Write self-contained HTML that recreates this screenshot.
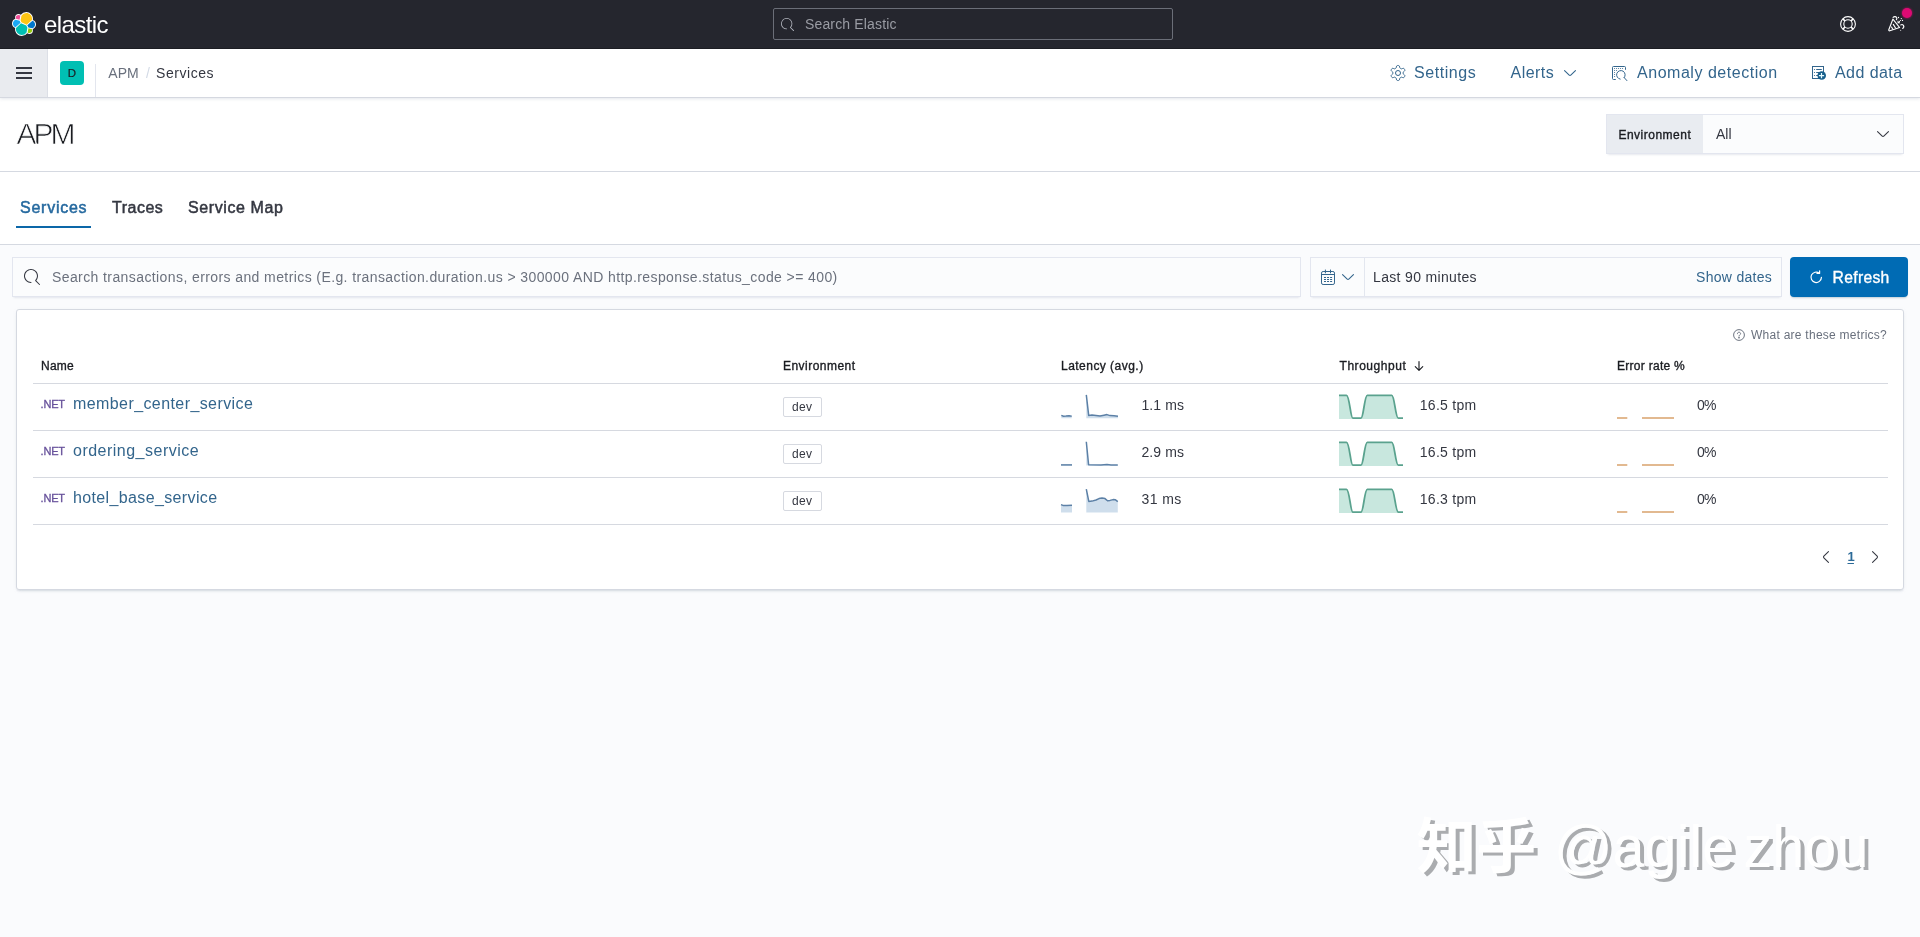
<!DOCTYPE html>
<html lang="en">
<head>
<meta charset="utf-8">
<title>Services - APM - Elastic</title>
<style>
*{box-sizing:border-box;margin:0;padding:0}
html,body{width:1920px;height:937px;overflow:hidden}
body{background:#fafbfd;font-family:"Liberation Sans","Noto Sans CJK SC",sans-serif;color:#343741;position:relative;font-size:14px}
#app{position:absolute;left:0;top:0;width:1920px;height:937px;will-change:transform}
.abs{position:absolute}
.t{position:absolute;white-space:pre;line-height:1}
svg{position:absolute;overflow:visible}
a{color:inherit;text-decoration:none}
.med{-webkit-text-stroke:.35px currentColor}

/* top dark bar */
#topbar{position:absolute;left:0;top:0;width:1920px;height:49px;background:#25262e;border-bottom:1px solid #1b1c22}
#brand{left:44px;top:13px;font-size:24px;color:#fff;letter-spacing:-.6px}
#gsearch{position:absolute;left:773px;top:8px;width:400px;height:32px;border:1px solid #6b6e78;border-radius:2px;background:#25262e}
#gsearch span{left:31px;top:8px;font-size:14px;color:#9a9ca4;letter-spacing:.15px}

/* second header */
#subhdr{position:absolute;left:0;top:49px;width:1920px;height:48px;background:#fff;z-index:5;box-shadow:0 1px 0 rgba(211,214,222,.9),0 2px 3px 0 rgba(152,162,179,.25)}
#menubtn{position:absolute;left:0;top:0;width:48px;height:48px;background:#e9ebef;border-right:1px solid #dcdfe6}
#avatar{position:absolute;left:60px;top:12px;width:24px;height:24px;border-radius:4px;background:#00bfb3;color:#1a1c21;font-size:11.500px;text-align:center;line-height:24px}
#avsep{position:absolute;left:95px;top:15px;width:1px;height:33px;background:#e3e6ee}
.bc{font-size:14px;top:17px}
.hl{font-size:16px;top:16px;color:#33658c}

/* page title */
#titlebar{position:absolute;left:0;top:97px;width:1920px;height:75px;background:#fff;border-bottom:1px solid #d5d9e1}
#ptitle{left:16.500px;top:22px;font-size:30px;color:#1a1c21;letter-spacing:-3px;-webkit-text-stroke:.7px #fff}
#envsel{position:absolute;left:1606px;top:17px;width:298px;height:40px;background:#fbfcfd;box-shadow:0 1px 1px -1px rgba(152,162,179,.2),0 3px 2px -2px rgba(152,162,179,.2),inset 0 0 0 1px rgba(15,39,118,.1)}
#envlab{position:absolute;left:1px;top:1px;width:96px;height:38px;background:#e9ecf1}

/* tabs */
#tabbar{position:absolute;left:0;top:172px;width:1920px;height:73px;background:#fff;border-bottom:1px solid #d5d9e1}
.tab{font-size:16px;top:28px;color:#343741;-webkit-text-stroke:.5px currentColor}
#tabsel{position:absolute;left:16px;top:54px;width:75px;height:2px;background:#0c67a8}

/* query row */
.field{position:absolute;height:40px;top:257px;background:#fbfcfd;box-shadow:0 1px 1px -1px rgba(152,162,179,.2),0 3px 2px -2px rgba(152,162,179,.2),inset 0 0 0 1px rgba(15,39,118,.1)}
#refresh{position:absolute;left:1790px;top:257px;width:118px;height:40px;border-radius:4px;background:#006bb4;box-shadow:0 2px 2px -1px rgba(54,97,126,.3)}

/* panel */
#panel{position:absolute;left:16px;top:309px;width:1888px;height:281px;background:#fff;border:1px solid #d5d9e1;border-radius:3px;box-shadow:0 2px 2px -1px rgba(152,162,179,.3),0 1px 5px -2px rgba(152,162,179,.3)}
.hline{position:absolute;left:16px;width:1855px;height:1px;background:#d6d9e0}
.th{font-size:12px;top:50px;color:#1a1c21}
.cell{font-size:14px;color:#343741}
.svc{font-size:16px;color:#33658c;letter-spacing:.45px}
.net{font-size:11px;color:#66509a;letter-spacing:-.2px;-webkit-text-stroke:.3px currentColor}
.badge{position:absolute;left:766px;width:39px;height:20px;border:1px solid #d6d9e0;border-radius:2px;background:#fff}
.badge span{left:8px;top:3px;font-size:12px;letter-spacing:.28px;color:#343741}

/* watermark */
#wm{left:0;top:0;color:#fff;text-shadow:4px 3px 0 #aaacaf}
#wm span{position:absolute;white-space:pre;line-height:1;display:block}
#wmc{left:1416.500px;top:818px;font-size:60px;letter-spacing:-.2px;font-weight:700}
#wml{left:1554.400px;top:817.500px;font-size:59px;word-spacing:-7px;transform-origin:0 0;transform:scaleX(.977)}
</style>
</head>
<body>
<div id="app">

<header id="topbar">
  <svg id="logo" style="left:12px;top:12px" width="24" height="24" viewBox="0 0 32 32">
    <g fill="none" fill-rule="evenodd">
      <path fill="#FFF" d="M32 16.77a6.334 6.334 0 00-4.188-5.965c.116-.613.172-1.22.172-1.84C27.984 4.018 23.966 0 19.031 0a8.904 8.904 0 00-7.256 3.712 4.733 4.733 0 00-2.897-.987 4.753 4.753 0 00-4.747 4.747c0 .56.102 1.111.283 1.626C1.763 10.046 0 12.573 0 15.26c0 2.673 1.659 5.069 4.2 5.976a8.973 8.973 0 00-.171 1.84c0 4.928 4.011 8.939 8.939 8.939a8.913 8.913 0 007.256-3.727 4.738 4.738 0 002.897 1.002 4.753 4.753 0 004.747-4.748c0-.56-.102-1.11-.283-1.626 2.633-.948 4.415-3.474 4.415-6.146"/>
      <path fill="#FEC514" d="M12.58 13.787l7.002 3.211 7.066-6.213a7.849 7.849 0 00.152-1.557c0-4.287-3.487-7.774-7.774-7.774a7.76 7.76 0 00-6.416 3.394l-1.177 6.107 1.147 2.832z"/>
      <path fill="#00BFB3" d="M5.352 21.215c-.103.512-.152 1.033-.152 1.573 0 4.3 3.497 7.79 7.796 7.79a7.78 7.78 0 006.421-3.4l1.168-6.065-1.558-2.975-7.023-3.193-6.652 6.27z"/>
      <path fill="#F04E98" d="M5.305 9.085l4.794 1.135 1.05-5.471a3.794 3.794 0 00-2.271-.756 3.782 3.782 0 00-3.782 3.782c0 .455.075.89.209 1.31"/>
      <path fill="#1BA9F5" d="M4.889 10.231c-2.141.711-3.636 2.767-3.636 5.05 0 2.22 1.374 4.204 3.44 4.99l6.73-6.083-1.236-2.64-5.298-1.317z"/>
      <path fill="#93C90E" d="M20.873 27.178a3.768 3.768 0 002.263.767 3.782 3.782 0 003.782-3.782c0-.456-.075-.89-.209-1.31l-4.79-1.121-1.046 5.446z"/>
      <path fill="#07C" d="M21.847 20.563l5.271 1.232c2.148-.711 3.636-2.767 3.636-5.053 0-2.215-1.38-4.202-3.45-4.986l-6.895 6.042 1.438 2.765z"/>
    </g>
  </svg>
  <span class="t" id="brand">elastic</span>

  <div id="gsearch">
    <svg style="left:7px;top:9px" width="13" height="13" viewBox="0 0 16 16" fill="#b4b7c0"><path d="M11.271 11.978l3.872 3.873a.502.502 0 00.708 0 .502.502 0 000-.708l-3.565-3.564c2.38-2.747 2.267-6.923-.342-9.532-2.73-2.73-7.17-2.73-9.898 0-2.728 2.729-2.728 7.17 0 9.9a6.955 6.955 0 004.949 2.05.5.5 0 000-1 5.96 5.96 0 01-4.242-1.757 6.01 6.01 0 010-8.486c2.337-2.34 6.143-2.34 8.484 0a6.01 6.01 0 010 8.486.5.5 0 00.034.738z"/></svg>
    <span class="t">Search Elastic</span>
  </div>

  <!-- help (lifebuoy) -->
  <svg style="left:1840px;top:16px" width="16" height="16" viewBox="0 0 16 16" fill="none" stroke="#fff" stroke-width="1.1">
    <circle cx="8" cy="8" r="7.4"/><circle cx="8" cy="8" r="4.2"/>
    <path d="M2.8 2.8l2.3 2.3M13.2 2.8l-2.3 2.3M2.8 13.2l2.3-2.3M13.2 13.2l-2.3-2.3" stroke-width="1.6"/>
  </svg>
  <!-- cheer (party popper) -->
  <svg style="left:1888px;top:16px" width="16" height="16" viewBox="0 0 16 16" fill="none" stroke="#fff" stroke-width="1.150" stroke-linecap="round" stroke-linejoin="round">
    <path d="M4.900 3.100L.800 13.700a.800.800 0 001 1.050L11.600 11.500z"/>
    <path d="M5.300 8.400l2.100 3.400M3.500 11l1.200 2"/>
    <path d="M5.100 1.300c1-1 2.800-.9 3.500.200.500.800.300 1.500-.200 2.200"/>
    <path d="M12.800 8.900c.8-.5 2-.3 2.600.5.700 1 .3 2.300-.700 3.100"/>
    <path d="M12.600 4.400l-2.600 2.400M10 5.200v1.600h1.600" stroke-width="1"/>
    <g fill="#fff" stroke="none"><circle cx="10.500" cy="1.500" r=".65"/><circle cx="13.300" cy="2.600" r=".65"/><circle cx="14.500" cy="4.400" r=".65"/><circle cx="12.700" cy="14.300" r=".5"/></g>
  </svg>
  <div class="abs" style="left:1902.300px;top:8.200px;width:10px;height:10px;border-radius:50%;background:#dd0a73;box-shadow:0 0 2px 0.5px rgba(221,10,115,.55)"></div>
</header>

<nav id="subhdr">
  <div id="menubtn">
    <svg style="left:16px;top:16px" width="16" height="16" viewBox="0 0 16 16" fill="#343741"><path d="M0 2h16v2H0zM0 7h16v2H0zM0 12h16v2H0z"/></svg>
  </div>
  <div id="avatar"><span style="-webkit-text-stroke:.2px currentColor">D</span></div>
  <div id="avsep"></div>
  <span class="t bc" style="left:108.300px;color:#69707d;letter-spacing:.05px">APM</span>
  <span class="t bc" style="left:146px;color:#d3dae6">/</span>
  <span class="t bc" style="left:156px;color:#343741;letter-spacing:.55px">Services</span>

  <!-- Settings -->
  <svg style="left:1390px;top:16px" width="16" height="16" viewBox="0 0 16 16" fill="none" stroke="#33658c" stroke-width="1" stroke-linejoin="round">
    <path d="M13.20 8.00 L13.20 8.34 L13.24 8.69 L13.47 9.09 L14.13 9.64 L14.74 10.29 L14.85 10.84 L14.71 11.31 L14.50 11.75 L14.22 12.16 L13.88 12.51 L13.35 12.69 L12.49 12.49 L11.68 12.20 L11.22 12.20 L10.90 12.34 L10.60 12.50 L10.31 12.68 L10.02 12.89 L9.79 13.29 L9.64 14.13 L9.39 14.98 L8.97 15.35 L8.49 15.47 L8.00 15.50 L7.51 15.47 L7.03 15.35 L6.61 14.98 L6.36 14.13 L6.21 13.29 L5.98 12.89 L5.69 12.68 L5.40 12.50 L5.10 12.34 L4.78 12.20 L4.32 12.20 L3.51 12.49 L2.65 12.69 L2.12 12.51 L1.78 12.16 L1.50 11.75 L1.29 11.31 L1.15 10.84 L1.26 10.29 L1.87 9.64 L2.53 9.09 L2.76 8.69 L2.80 8.34 L2.80 8.00 L2.80 7.66 L2.76 7.31 L2.53 6.91 L1.87 6.36 L1.26 5.71 L1.15 5.16 L1.29 4.69 L1.50 4.25 L1.78 3.84 L2.12 3.49 L2.65 3.31 L3.51 3.51 L4.32 3.80 L4.78 3.80 L5.10 3.66 L5.40 3.50 L5.69 3.32 L5.98 3.11 L6.21 2.71 L6.36 1.87 L6.61 1.02 L7.03 0.65 L7.51 0.53 L8.00 0.50 L8.49 0.53 L8.97 0.65 L9.39 1.02 L9.64 1.87 L9.79 2.71 L10.02 3.11 L10.31 3.32 L10.60 3.50 L10.90 3.66 L11.22 3.80 L11.68 3.80 L12.49 3.51 L13.35 3.31 L13.88 3.49 L14.22 3.84 L14.50 4.25 L14.71 4.69 L14.85 5.16 L14.74 5.71 L14.13 6.36 L13.47 6.91 L13.24 7.31 L13.20 7.66Z"/>
    <circle cx="8" cy="8" r="2.5"/>
  </svg>
  <span class="t hl" style="left:1414px;letter-spacing:.55px">Settings</span>
  <span class="t hl" style="left:1510.500px;letter-spacing:.47px">Alerts</span>
  <svg style="left:1562px;top:16px" width="16" height="16" viewBox="0 0 16 16" fill="#33658c"><path d="M13.069 5.157L8.384 9.768a.546.546 0 01-.768 0L2.93 5.158a.552.552 0 00-.771 0 .53.53 0 000 .759l4.684 4.61c.641.631 1.672.63 2.312 0l4.684-4.61a.53.53 0 000-.76.552.552 0 00-.771 0z"/></svg>

  <!-- Anomaly detection (inspect) -->
  <svg style="left:1611px;top:16px" width="16" height="16" viewBox="0 0 16 16" fill="none" stroke="#33658c" stroke-width="1" stroke-linecap="round">
    <path d="M4.400 14.500H2.500a1 1 0 01-1-1V2.500a1 1 0 011-1h11a1 1 0 011 1v1.900"/>
    <g fill="#33658c" stroke="none">
      <circle cx="3.600" cy="3.500" r=".55"/><circle cx="5.600" cy="3.500" r=".55"/><circle cx="7.600" cy="3.500" r=".55"/><circle cx="9.600" cy="3.500" r=".55"/><circle cx="11.600" cy="3.500" r=".55"/>
      <circle cx="3.600" cy="5.500" r=".55"/><circle cx="5.600" cy="5.500" r=".55"/>
      <circle cx="3.600" cy="7.500" r=".55"/><circle cx="3.600" cy="9.500" r=".55"/><circle cx="3.600" cy="11.500" r=".55"/>
    </g>
    <path d="M9.150 14.130A4.300 4.300 0 1113.190 12.660"/>
    <path d="M13.200 12.600l2.700 3"/>
  </svg>
  <span class="t hl" style="left:1637px;letter-spacing:.53px">Anomaly detection</span>

  <!-- Add data (indexOpen) -->
  <svg style="left:1811px;top:16px" width="16" height="16" viewBox="0 0 16 16" fill="none" stroke="#33658c" stroke-width="1">
    <rect x="1.500" y="1.500" width="11" height="12"/>
    <path d="M5.200 4.500h5.600M5.200 7.500h3M5.200 10.500h2" stroke-width="1.100"/>
    <g fill="#33658c" stroke="none"><circle cx="3.500" cy="4.500" r=".6"/><circle cx="3.500" cy="7.500" r=".6"/><circle cx="3.500" cy="10.500" r=".6"/></g>
    <circle cx="10.700" cy="10.500" r="4.300" fill="#175f8c" stroke="none"/>
    <path d="M10.500 8v5.200M7.900 10.600h5.200" stroke="#e6fbff" stroke-width="1.200"/>
  </svg>
  <span class="t hl" style="left:1835px;letter-spacing:.43px">Add data</span>
</nav>

<section id="titlebar">
  <h1 class="t" id="ptitle" style="font-weight:400">APM</h1>
  <div id="envsel">
    <div id="envlab"><span class="t med" style="left:11.400px;top:13.500px;font-size:12px;color:#1a1c21;letter-spacing:.5px">Environment</span></div>
    <span class="t" style="left:110px;top:13px;font-size:14px;color:#343741">All</span>
    <svg style="left:269px;top:12px" width="16" height="16" viewBox="0 0 16 16" fill="#343741"><path d="M13.069 5.157L8.384 9.768a.546.546 0 01-.768 0L2.93 5.158a.552.552 0 00-.771 0 .53.53 0 000 .759l4.684 4.61c.641.631 1.672.63 2.312 0l4.684-4.61a.53.53 0 000-.76.552.552 0 00-.771 0z"/></svg>
  </div>
</section>

<section id="tabbar">
  <span class="t tab med" style="left:20px;color:#25699f;letter-spacing:.75px">Services</span>
  <span class="t tab med" style="left:112px;letter-spacing:.5px">Traces</span>
  <span class="t tab med" style="left:188px;letter-spacing:.6px">Service Map</span>
  <div id="tabsel"></div>
</section>

<!-- query bar -->
<div class="field" style="left:12px;width:1289px">
  <svg style="left:12px;top:12px" width="16" height="16" viewBox="0 0 16 16" fill="#343741"><path d="M11.271 11.978l3.872 3.873a.502.502 0 00.708 0 .502.502 0 000-.708l-3.565-3.564c2.38-2.747 2.267-6.923-.342-9.532-2.73-2.73-7.17-2.73-9.898 0-2.728 2.729-2.728 7.170 0 9.900a6.955 6.955 0 004.949 2.050.5.5 0 000-1 5.960 5.960 0 01-4.242-1.757 6.010 6.010 0 010-8.486c2.337-2.340 6.143-2.340 8.484 0a6.010 6.010 0 010 8.486.5.5 0 00.034.738z"/></svg>
  <span class="t" style="left:40px;top:13px;font-size:14px;color:#6b717d;letter-spacing:.403px">Search transactions, errors and metrics (E.g. transaction.duration.us &gt; 300000 AND http.response.status_code &gt;= 400)</span>
</div>

<div class="field" style="left:1310px;width:472px">
  <div class="abs" style="left:54px;top:1px;width:1px;height:38px;background:#e3e7ef"></div>
  <!-- calendar -->
  <svg style="left:10px;top:12px" width="16" height="16" viewBox="0 0 16 16" fill="none" stroke="#33658c" stroke-width="1">
    <rect x="1.500" y="2.500" width="13" height="13" rx="1.600"/>
    <path d="M1.500 5.500h13M5.400 1v2.900M10.500 1v2.900" stroke-linecap="round"/>
    <path d="M4 8.500h8.500M4 10.500h8.500M4 12.500h8.500" stroke-dasharray="2 1.050" stroke-width="1.100"/>
  </svg>
  <svg style="left:30px;top:12px" width="16" height="16" viewBox="0 0 16 16" fill="#33658c"><path d="M13.069 5.157L8.384 9.768a.546.546 0 01-.768 0L2.930 5.158a.552.552 0 00-.771 0 .53.53 0 000 .759l4.684 4.610c.641.631 1.672.630 2.312 0l4.684-4.610a.53.53 0 000-.760.552.552 0 00-.771 0z"/></svg>
  <span class="t" style="left:63px;top:13px;font-size:14px;color:#343741;letter-spacing:.34px">Last 90 minutes</span>
  <span class="t" style="left:386px;top:13px;font-size:14px;color:#33658c;letter-spacing:.3px">Show dates</span>
</div>

<div id="refresh">
  <svg style="left:19px;top:12.700px" width="14.400" height="14.400" viewBox="0 0 16 16" fill="none" stroke="#fff" stroke-width="1.300" stroke-linecap="round" stroke-linejoin="round">
    <path d="M13.800 8.200a5.800 5.800 0 11-2.300-4.700"/>
    <path d="M11.800 .9v3h-3"/>
  </svg>
  <span class="t med" style="left:42.600px;top:12.500px;font-size:15.700px;color:#fff;letter-spacing:.3px">Refresh</span>
</div>

<main id="panel">
  <svg style="left:1716px;top:18.700px" width="12" height="12" viewBox="0 0 16 16" fill="none" stroke="#69707d" stroke-width="1.300">
    <circle cx="8" cy="8" r="7.200"/>
    <path d="M5.900 6.300c0-1.200.9-2 2.100-2s2.100.8 2.100 1.900c0 1.600-2.100 1.500-2.100 3.300" stroke-linecap="round"/>
    <circle cx="8" cy="11.700" r=".6" fill="#69707d"/>
  </svg>
  <span class="t" style="left:1734px;top:19px;font-size:12px;color:#69707d;letter-spacing:.26px">What are these metrics?</span>

  <span class="t th med" style="left:24px;letter-spacing:.25px">Name</span>
  <span class="t th med" style="left:766px;letter-spacing:.47px">Environment</span>
  <span class="t th med" style="left:1044px;letter-spacing:.47px">Latency (avg.)</span>
  <span class="t th med" style="left:1322.500px;letter-spacing:.55px">Throughput</span>
  <svg style="left:1396px;top:50px" width="12" height="12" viewBox="0 0 16 16" fill="none" stroke="#1a1c21" stroke-width="1.500" stroke-linecap="round" stroke-linejoin="round"><path d="M8 2v11.500M3 8.800l5 5 5-5"/></svg>
  <span class="t th med" style="left:1600px;letter-spacing:.28px">Error rate %</span>

  <div class="hline" style="top:73px"></div>
  <div class="hline" style="top:120px"></div>
  <div class="hline" style="top:167px"></div>
  <div class="hline" style="top:214px"></div>

  <!-- rows inserted below -->
  <div id="rows">
  <article class="row" style="position:absolute;left:0;top:73px;width:1886px;height:47px">
    <span class="t net" style="left:23.600px;top:15.600px">.NET</span>
    <a class="t svc" style="left:56px;top:13px;letter-spacing:.41px">member_center_service</a>
    <div class="badge" style="top:14px"><span class="t">dev</span></div>
    <svg style="left:1044px;top:0" width="64" height="47" viewBox="0 0 64 47" fill="none">
      <path d="M0.3 32.4 L2.5 33.2 L5 33.1 L8 32.7 L10.7 33.2 L10.7 35.2 L0.3 35.2Z" fill="#6092c0" fill-opacity=".3"/>
      <path d="M25.3 11.8 L27.7 32.4 L31 31.9 L35 32.4 L39 33 L43 32.2 L46 31.6 L49 32.6 L53 32.8 L57 33.3 L57 35.2 L25.3 35.2Z" fill="#6092c0" fill-opacity=".3"/>
      <path d="M0.3 32.4 L2.5 33.2 L5 33.1 L8 32.7 L10.7 33.2" stroke="#5c80a6" stroke-width="1.500" stroke-linejoin="round"/>
      <path d="M25.3 11.8 L27.7 32.4 L31 31.9 L35 32.4 L39 33 L43 32.2 L46 31.6 L49 32.6 L53 32.8 L57 33.3" stroke="#5c80a6" stroke-width="1.500" stroke-linejoin="round"/>
    </svg>
    <span class="t cell" style="left:1124.400px;top:14.700px;letter-spacing:.1px">1.1 ms</span>
    <svg style="left:1322px;top:0" width="64" height="47" viewBox="0 0 64 47" fill="none">
      <path d="M0 12.300 L7.500 12.300 C10.500 12.300 11.500 35.200 13.800 35.200 L22 35.200 C24.500 35.200 25.500 12.300 28.300 12.300 L52.800 12.300 C55.500 12.300 56.500 35.200 59.300 35.200 L64 35.200 L64 36 L0 36Z" fill="#54b399" fill-opacity=".32"/>
      <path d="M0 12.300 L7.500 12.300 C10.500 12.300 11.500 35.200 13.800 35.200 L22 35.200 C24.500 35.200 25.500 12.300 28.300 12.300 L52.800 12.300 C55.500 12.300 56.500 35.200 59.300 35.200 L64 35.200" stroke="#5aa28e" stroke-width="1.800"/>
    </svg>
    <span class="t cell" style="left:1402.800px;top:14.700px;letter-spacing:.28px">16.5 tpm</span>
    <svg style="left:1600px;top:0" width="64" height="47" viewBox="0 0 64 47" fill="none" stroke="#d9a26c" stroke-width="1.500">
      <path d="M0 35 H10.300 M25 35 H57"/>
    </svg>
    <span class="t cell" style="left:1680px;top:14.700px;letter-spacing:-.9px">0%</span>
  </article>
  <article class="row" style="position:absolute;left:0;top:120px;width:1886px;height:47px">
    <span class="t net" style="left:23.600px;top:15.600px">.NET</span>
    <a class="t svc" style="left:56px;top:13px;letter-spacing:.49px">ordering_service</a>
    <div class="badge" style="top:14px"><span class="t">dev</span></div>
    <svg style="left:1044px;top:0" width="64" height="47" viewBox="0 0 64 47" fill="none">
      <path d="M0 34.9 L11 34.9 L11 35.6 L0 35.6Z" fill="#6092c0" fill-opacity=".3"/>
      <path d="M25.3 11.7 L27.6 34.8 L40 34.9 L46 34.5 L50 34.9 L56.8 34.9 L56.8 35.6 L25.3 35.6Z" fill="#6092c0" fill-opacity=".3"/>
      <path d="M0 34.9 L11 34.9" stroke="#5c80a6" stroke-width="1.500" stroke-linejoin="round"/>
      <path d="M25.3 11.7 L27.6 34.8 L40 34.9 L46 34.5 L50 34.9 L56.8 34.9" stroke="#5c80a6" stroke-width="1.500" stroke-linejoin="round"/>
    </svg>
    <span class="t cell" style="left:1124.400px;top:14.700px;letter-spacing:.1px">2.9 ms</span>
    <svg style="left:1322px;top:0" width="64" height="47" viewBox="0 0 64 47" fill="none">
      <path d="M0 12.300 L7.500 12.300 C10.500 12.300 11.500 35.200 13.800 35.200 L22 35.200 C24.500 35.200 25.500 12.300 28.300 12.300 L52.800 12.300 C55.500 12.300 56.500 35.200 59.300 35.200 L64 35.200 L64 36 L0 36Z" fill="#54b399" fill-opacity=".32"/>
      <path d="M0 12.300 L7.500 12.300 C10.500 12.300 11.500 35.200 13.800 35.200 L22 35.200 C24.500 35.200 25.500 12.300 28.300 12.300 L52.800 12.300 C55.500 12.300 56.500 35.200 59.300 35.200 L64 35.200" stroke="#5aa28e" stroke-width="1.800"/>
    </svg>
    <span class="t cell" style="left:1402.800px;top:14.700px;letter-spacing:.28px">16.5 tpm</span>
    <svg style="left:1600px;top:0" width="64" height="47" viewBox="0 0 64 47" fill="none" stroke="#d9a26c" stroke-width="1.500">
      <path d="M0 35 H10.300 M25 35 H57"/>
    </svg>
    <span class="t cell" style="left:1680px;top:14.700px;letter-spacing:-.9px">0%</span>
  </article>
  <article class="row" style="position:absolute;left:0;top:167px;width:1886px;height:47px">
    <span class="t net" style="left:23.600px;top:15.600px">.NET</span>
    <a class="t svc" style="left:56px;top:13px;letter-spacing:.365px">hotel_base_service</a>
    <div class="badge" style="top:14px"><span class="t">dev</span></div>
    <svg style="left:1044px;top:0" width="64" height="47" viewBox="0 0 64 47" fill="none">
      <path d="M0 27.6 L2 28.4 L6 28.6 L11 28.2 L11 35.6 L0 35.6Z" fill="#6092c0" fill-opacity=".3"/>
      <path d="M25.3 12.2 L27.8 24.4 L31 24.1 L35 23 L38 21.6 L41 21 L44 21.6 L46.5 23.8 L49 23.4 L52 22.6 L54.5 22.8 L56.8 24.6 L56.8 35.6 L25.3 35.6Z" fill="#6092c0" fill-opacity=".3"/>
      <path d="M0 27.6 L2 28.4 L6 28.6 L11 28.2" stroke="#5c80a6" stroke-width="1.500" stroke-linejoin="round"/>
      <path d="M25.3 12.2 L27.8 24.4 L31 24.1 L35 23 L38 21.6 L41 21 L44 21.6 L46.5 23.8 L49 23.4 L52 22.6 L54.5 22.8 L56.8 24.6" stroke="#5c80a6" stroke-width="1.500" stroke-linejoin="round"/>
    </svg>
    <span class="t cell" style="left:1124.400px;top:14.700px;letter-spacing:.45px">31 ms</span>
    <svg style="left:1322px;top:0" width="64" height="47" viewBox="0 0 64 47" fill="none">
      <path d="M0 12.300 L7.500 12.300 C10.500 12.300 11.500 35.200 13.800 35.200 L22 35.200 C24.500 35.200 25.500 12.300 28.300 12.300 L52.800 12.300 C55.500 12.300 56.500 35.200 59.300 35.200 L64 35.200 L64 36 L0 36Z" fill="#54b399" fill-opacity=".32"/>
      <path d="M0 12.300 L7.500 12.300 C10.500 12.300 11.500 35.200 13.800 35.200 L22 35.200 C24.500 35.200 25.500 12.300 28.300 12.300 L52.800 12.300 C55.500 12.300 56.500 35.200 59.300 35.200 L64 35.200" stroke="#5aa28e" stroke-width="1.800"/>
    </svg>
    <span class="t cell" style="left:1402.800px;top:14.700px;letter-spacing:.28px">16.3 tpm</span>
    <svg style="left:1600px;top:0" width="64" height="47" viewBox="0 0 64 47" fill="none" stroke="#d9a26c" stroke-width="1.500">
      <path d="M0 35 H10.300 M25 35 H57"/>
    </svg>
    <span class="t cell" style="left:1680px;top:14.700px;letter-spacing:-.9px">0%</span>
  </article>
  </div>

  <!-- pagination -->
  <svg style="left:1801px;top:239px" width="16" height="16" viewBox="0 0 16 16" fill="#343741"><path transform="rotate(90 8 8)" d="M13.069 5.157L8.384 9.768a.546.546 0 01-.768 0L2.930 5.158a.552.552 0 00-.771 0 .53.53 0 000 .759l4.684 4.610c.641.631 1.672.630 2.312 0l4.684-4.610a.53.53 0 000-.760.552.552 0 00-.771 0z"/></svg>
  <span class="t" style="left:1830.500px;top:240.300px;font-size:13px;font-weight:700;letter-spacing:-.8px;color:#2b6a98;text-decoration:underline;text-underline-offset:1.500px">1</span>
  <svg style="left:1850px;top:239px" width="16" height="16" viewBox="0 0 16 16" fill="#343741"><path transform="rotate(-90 8 8)" d="M13.069 5.157L8.384 9.768a.546.546 0 01-.768 0L2.930 5.158a.552.552 0 00-.771 0 .53.53 0 000 .759l4.684 4.610c.641.631 1.672.630 2.312 0l4.684-4.610a.53.53 0 000-.760.552.552 0 00-.771 0z"/></svg>
</main>

<div class="t" id="wm"><span id="wmc">知乎</span><span id="wml">@agile zhou</span></div>

</div>
</body>
</html>
